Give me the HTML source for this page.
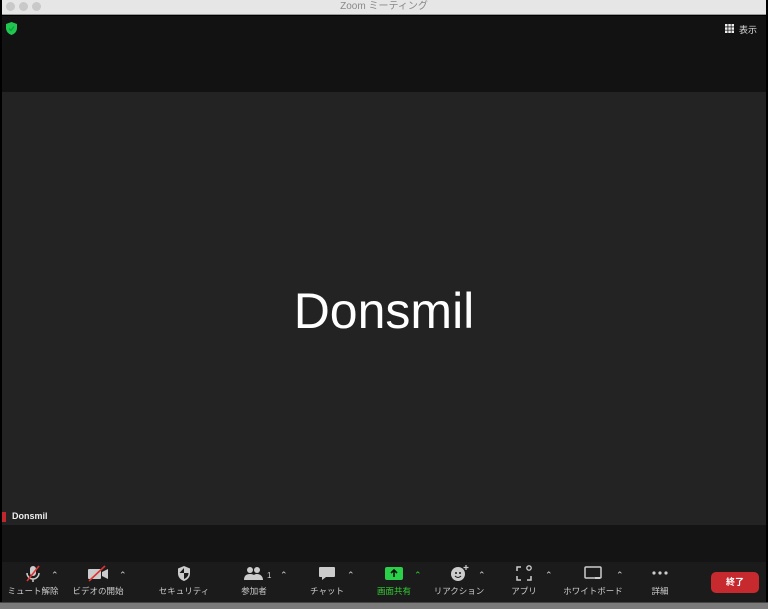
<!DOCTYPE html>
<html><head><meta charset="utf-8"><style>
*{margin:0;padding:0;box-sizing:border-box}
body{width:768px;height:609px;background:#000;position:relative;overflow:hidden;font-family:"Liberation Sans","Noto Sans CJK JP",sans-serif;color:#ddd}
.title{position:absolute;left:2px;top:0;width:764px;height:15px;background:#e6e6e6;border-bottom:1px solid #999;text-align:center;font-size:10px;color:#888;line-height:13px}
.dots{position:absolute;left:4px;top:2px}
.dots i{display:inline-block;width:9px;height:9px;border-radius:50%;background:#c9c9c9;margin-right:4px}
.top{position:absolute;left:2px;top:16px;width:764px;height:76px;background:#121212}
.video{position:absolute;left:2px;top:92px;width:764px;height:433px;background:#232323}
.name{position:absolute;left:0;width:764px;top:190px;text-align:center;font-size:50px;color:#fff}
.tag{position:absolute;left:2px;top:510px;height:13px;font-size:9px;color:#eee;font-weight:bold;line-height:13px}
.tag b{display:inline-block;width:4px;height:10px;background:#c0272d;vertical-align:middle;margin-right:6px}
.strip{position:absolute;left:2px;top:525px;width:764px;height:37px;background:#141414}
.bar{position:absolute;left:2px;top:562px;width:764px;height:40px;background:#1b1b1b}
.bottom{position:absolute;left:0;top:602px;width:768px;height:7px;background:#7a7a7a;border-top:1px solid #444}
.it{position:absolute;top:565px;text-align:center;font-size:8.5px;color:#ccc;width:80px}
.it svg{display:block;margin:0 auto 3px;height:17px}
.car{position:absolute;top:570px;font-size:9px;color:#ccc}
.end{position:absolute;left:711px;top:572px;width:48px;height:21px;background:#c62a2f;border-radius:5px;color:#fff;font-size:9px;font-weight:bold;text-align:center;line-height:21px}
</style></head><body>
<div class="title"><div class="dots"><i></i><i></i><i></i></div>Zoom ミーティング</div>
<div class="top">
<svg style="position:absolute;left:4px;top:6px" width="11" height="13" viewBox="0 0 11 13"><path d="M5.5 0L11 2v4c0 3.5-2.5 6-5.5 7C2.5 12 0 9.5 0 6V2z" fill="#23c552"/><path d="M3 6.5l2 2 3-4" stroke="#0a3" stroke-width="1.3" fill="none"/></svg>
<svg style="position:absolute;left:723px;top:8px" width="9" height="9" viewBox="0 0 9 9" fill="#eee"><rect x="0" y="0" width="2.5" height="2.5"/><rect x="3.3" y="0" width="2.5" height="2.5"/><rect x="6.5" y="0" width="2.5" height="2.5"/><rect x="0" y="3.3" width="2.5" height="2.5"/><rect x="3.3" y="3.3" width="2.5" height="2.5"/><rect x="6.5" y="3.3" width="2.5" height="2.5"/><rect x="0" y="6.5" width="2.5" height="2.5"/><rect x="3.3" y="6.5" width="2.5" height="2.5"/><rect x="6.5" y="6.5" width="2.5" height="2.5"/></svg>
<span style="position:absolute;left:737px;top:7px;font-size:9px;color:#ddd">表示</span>
</div>
<div class="video"><div class="name">Donsmil</div></div>
<div class="tag"><b></b>Donsmil</div>
<div class="strip"></div>
<div class="bar"></div>
<div class="bottom"></div>

<div class="it" style="left:-7px"><svg viewBox="0 0 20 17" width="20"><rect x="7" y="1" width="6" height="10" rx="3" fill="#ccc"/><path d="M4 8a6 6 0 0 0 12 0M10 14v3" stroke="#ccc" stroke-width="1.5" fill="none"/><path d="M4 16L16 1" stroke="#d33" stroke-width="1.6"/></svg>ミュート解除</div>
<span class="car" style="left:51px">⌃</span>
<div class="it" style="left:58px"><svg viewBox="0 0 22 17" width="22"><rect x="1" y="4" width="13" height="10" rx="1" fill="#ccc"/><path d="M15 7l6-3v10l-6-3z" fill="#ccc"/><path d="M2 16L18 1" stroke="#d33" stroke-width="1.6"/></svg>ビデオの開始</div>
<span class="car" style="left:119px">⌃</span>
<div class="it" style="left:144px"><svg viewBox="0 0 16 17" width="16"><path d="M8 1l6 2.5v5c0 4-3 6.5-6 7.5-3-1-6-3.5-6-7.5v-5z" fill="#ccc"/><path d="M8 3v5H3.5M8 8h4.5c0 3-2 5-4.5 6" fill="#1b1b1b"/></svg>セキュリティ</div>
<div class="it" style="left:214px"><svg viewBox="0 0 20 17" width="20"><circle cx="6" cy="5" r="3" fill="#ccc"/><circle cx="13" cy="5" r="3" fill="#ccc"/><path d="M0 15c0-4 2-6 6-6s6 2 6 6zM8 15c0-4 2-6 5-6s6 2 6 6z" fill="#ccc"/></svg>参加者</div>
<span class="car" style="left:267px;font-size:8px;top:571px">1</span>
<span class="car" style="left:280px">⌃</span>
<div class="it" style="left:287px"><svg viewBox="0 0 18 17" width="18"><path d="M2 2h14a1 1 0 0 1 1 1v8a1 1 0 0 1-1 1H8l-4 3v-3H2a1 1 0 0 1-1-1V3a1 1 0 0 1 1-1z" fill="#ccc"/></svg>チャット</div>
<span class="car" style="left:347px">⌃</span>
<div class="it" style="left:354px;color:#3c3"><svg viewBox="0 0 18 17" width="18"><rect x="0" y="2" width="18" height="13" rx="2" fill="#2ad04a"/><path d="M9 12V5M6 8l3-3 3 3" stroke="#111" stroke-width="1.6" fill="none"/></svg>画面共有</div>
<span class="car" style="left:414px;color:#3c3">⌃</span>
<div class="it" style="left:419px"><svg viewBox="0 0 20 17" width="20"><circle cx="9" cy="9" r="7" fill="#ccc"/><circle cx="7" cy="8" r="1" fill="#1b1b1b"/><circle cx="11" cy="8" r="1" fill="#1b1b1b"/><path d="M6 11c2 2 4 2 6 0" stroke="#1b1b1b" stroke-width="1" fill="none"/><path d="M17 0v5M14.5 2.5h5" stroke="#ccc" stroke-width="1.2"/></svg>リアクション</div>
<span class="car" style="left:478px">⌃</span>
<div class="it" style="left:484px"><svg viewBox="0 0 18 17" width="18"><path d="M2 6V2h4M2 11v4h4M12 15h4v-4" stroke="#ccc" stroke-width="1.5" fill="none"/><circle cx="14" cy="3" r="2.2" stroke="#ccc" stroke-width="1.3" fill="none"/></svg>アプリ</div>
<span class="car" style="left:545px">⌃</span>
<div class="it" style="left:553px"><svg viewBox="0 0 18 17" width="18"><rect x="1" y="2" width="16" height="11" rx="1" stroke="#ccc" stroke-width="1.5" fill="none"/><path d="M11 13h5" stroke="#ccc" stroke-width="2"/></svg>ホワイトボード</div>
<span class="car" style="left:616px">⌃</span>
<div class="it" style="left:620px"><svg viewBox="0 0 18 17" width="18"><circle cx="3" cy="8" r="1.6" fill="#ccc"/><circle cx="9" cy="8" r="1.6" fill="#ccc"/><circle cx="15" cy="8" r="1.6" fill="#ccc"/></svg>詳細</div>
<div class="end">終了</div>
</body></html>
